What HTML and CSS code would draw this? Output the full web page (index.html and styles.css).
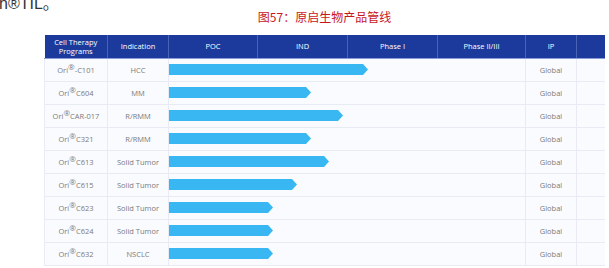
FILE: index.html
```html
<!DOCTYPE html>
<html lang="zh">
<head>
<meta charset="utf-8">
<link rel="stylesheet" href="styles.css">
</head>
<body>
<div class="intro">n®TIL。</div>
<div class="title">图57：原启生物产品管线</div>
<table class="pipeline">
  <colgroup>
    <col class="c-prog"><col class="c-ind"><col class="c-poc"><col class="c-indp"><col class="c-p1"><col class="c-p23"><col class="c-ip"><col class="c-end">
  </colgroup>
  <thead>
    <tr>
      <th>Cell Therapy<br>Programs</th>
      <th>Indication</th>
      <th>POC</th>
      <th>IND</th>
      <th>Phase I</th>
      <th>Phase II/III</th>
      <th>IP</th>
      <th></th>
    </tr>
  </thead>
  <tbody>
    <tr><td>Ori<sup class="reg">®</sup>-C101</td><td>HCC</td><td colspan="4" class="track"><div class="bar" style="width:199px"></div></td><td>Global</td><td></td></tr>
    <tr><td>Ori<sup class="reg">®</sup>C604</td><td>MM</td><td colspan="4" class="track"><div class="bar" style="width:142px"></div></td><td>Global</td><td></td></tr>
    <tr><td>Ori<sup class="reg">®</sup>CAR-017</td><td>R/RMM</td><td colspan="4" class="track"><div class="bar" style="width:174px"></div></td><td>Global</td><td></td></tr>
    <tr><td>Ori<sup class="reg">®</sup>C321</td><td>R/RMM</td><td colspan="4" class="track"><div class="bar" style="width:142px"></div></td><td>Global</td><td></td></tr>
    <tr><td>Ori<sup class="reg">®</sup>C613</td><td>Solid Tumor</td><td colspan="4" class="track"><div class="bar" style="width:160px"></div></td><td>Global</td><td></td></tr>
    <tr><td>Ori<sup class="reg">®</sup>C615</td><td>Solid Tumor</td><td colspan="4" class="track"><div class="bar" style="width:128px"></div></td><td>Global</td><td></td></tr>
    <tr><td>Ori<sup class="reg">®</sup>C623</td><td>Solid Tumor</td><td colspan="4" class="track"><div class="bar" style="width:104px"></div></td><td>Global</td><td></td></tr>
    <tr><td>Ori<sup class="reg">®</sup>C624</td><td>Solid Tumor</td><td colspan="4" class="track"><div class="bar" style="width:104px"></div></td><td>Global</td><td></td></tr>
    <tr><td>Ori<sup class="reg">®</sup>C632</td><td>NSCLC</td><td colspan="4" class="track"><div class="bar" style="width:104px"></div></td><td>Global</td><td></td></tr>
  </tbody>
</table>
</body>
</html>
```
FILE: styles.css
```css
html, body {
  margin: 0;
  padding: 0;
  background: #ffffff;
}
body {
  width: 609px;
  height: 268px;
  overflow: hidden;
  font-family: "Open Sans", "Noto Sans", "Liberation Sans", sans-serif;
}
.intro {
  font-family: "Liberation Sans", "Noto Sans CJK SC", sans-serif;
  font-size: 16px;
  line-height: 16px;
  color: #333333;
  margin-top: -4px;
  margin-left: -1px;
  height: 16px;
}
.title {
  font-family: "Noto Sans CJK SC", "Liberation Sans", sans-serif;
  font-size: 12px;
  line-height: 14px;
  color: #c8161d;
  text-align: center;
  width: 609px;
  margin-left: 20px;
  margin-top: -2px;
}
.pipeline {
  margin-top: 11px;
  margin-left: 44px;
  width: 560px;
  table-layout: fixed;
  border-collapse: collapse;
  background: #fafbff;
}
.c-prog { width: 63px; }
.c-ind { width: 61px; }
.c-poc { width: 89px; }
.c-indp { width: 90px; }
.c-p1 { width: 90px; }
.c-p23 { width: 88px; }
.c-ip { width: 51px; }
.c-end { width: 28px; }
.pipeline th {
  background: #1b3a9c;
  color: #ffffff;
  font-weight: 500;
  font-size: 7.5px;
  line-height: 9px;
  height: 23px;
  padding: 0;
  text-align: center;
  border-left: 1px solid #4862b4;
  border-bottom: 1px solid #8a9bd8;
}
.pipeline th:first-child {
  border-left: none;
}
.pipeline td {
  height: 22px;
  padding: 0;
  text-align: center;
  font-size: 7.5px;
  color: #7a7a7a;
  border: 1px solid #e8ebf3;
  white-space: nowrap;
}
.pipeline td:last-child {
  border-right: none;
}
.reg {
  font-size: 8px;
  vertical-align: 3px;
  line-height: 0;
}
.pipeline td.track {
  text-align: left;
}
.bar {
  height: 11px;
  background: #38b7f2;
  clip-path: polygon(0 0, calc(100% - 5px) 0, 100% 50%, calc(100% - 5px) 100%, 0 100%);
  margin-top: -1px;
}
```
